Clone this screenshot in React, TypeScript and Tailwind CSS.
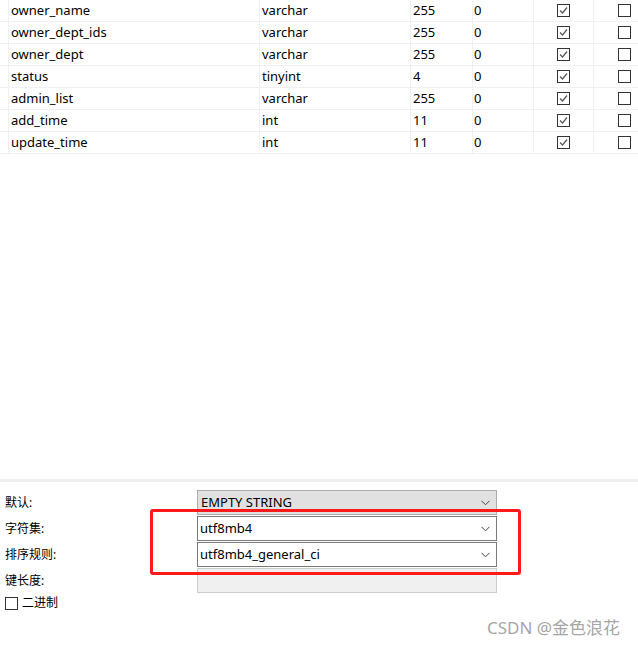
import React from 'react';

type Row = { name: string; type: string; len: string; dec: string };

const rows: Row[] = [
  { name: 'owner_name', type: 'varchar', len: '255', dec: '0' },
  { name: 'owner_dept_ids', type: 'varchar', len: '255', dec: '0' },
  { name: 'owner_dept', type: 'varchar', len: '255', dec: '0' },
  { name: 'status', type: 'tinyint', len: '4', dec: '0' },
  { name: 'admin_list', type: 'varchar', len: '255', dec: '0' },
  { name: 'add_time', type: 'int', len: '11', dec: '0' },
  { name: 'update_time', type: 'int', len: '11', dec: '0' },
];

function CheckBox({ checked }: { checked?: boolean }) {
  return (
    <span className="flex h-[13px] w-[13px] items-center justify-center border border-[#333333] bg-white">
      {checked && (
        <svg width="11" height="11" viewBox="0 0 11 11">
          <polyline points="2,5.5 4.5,8 9,2.5" fill="none" stroke="#555555" strokeWidth="1.2" />
        </svg>
      )}
    </span>
  );
}

function Chevron() {
  return (
    <svg width="9" height="6" viewBox="0 0 9 6" className="shrink-0">
      <polyline points="0.5,0.8 4.5,4.8 8.5,0.8" fill="none" stroke="#404040" strokeWidth="1" />
    </svg>
  );
}

function SelectField({ value, muted }: { value: string; muted?: boolean }) {
  return (
    <div
      className={
        muted
          ? 'flex h-[25px] w-[300px] items-center justify-between border border-[#adadad] bg-[#e1e1e1] pl-[3px] pr-[6px]'
          : 'flex h-[25px] w-[300px] items-center justify-between border border-[#7a7a7a] bg-white pl-[2px] pr-[6px]'
      }
    >
      <span className="text-[13px] text-black">{value}</span>
      <Chevron />
    </div>
  );
}

export default function App() {
  const cell = 'flex h-full items-center border-r border-[#f0f0f0]';
  return (
    <div
      className="relative h-[647px] w-[638px] overflow-hidden bg-white text-black"
      style={{ fontFamily: '"Noto Sans", "Noto Sans CJK SC", sans-serif' }}
    >
      {/* field table */}
      <div className="h-[479px]">
        {rows.map((r) => (
          <div key={r.name} className="flex h-[22px] border-b border-[#f0f0f0] text-[13px] leading-none">
            <div className={`${cell} w-[9px]`} />
            <div className={`${cell} w-[251px] pl-[2px]`}>{r.name}</div>
            <div className={`${cell} w-[151px] pl-[2px]`}>{r.type}</div>
            <div className={`${cell} w-[62px] pl-[2px]`}>{r.len}</div>
            <div className={`${cell} w-[61px] pl-[1px]`}>{r.dec}</div>
            <div className={`${cell} w-[60px] justify-center`}>
              <CheckBox checked />
            </div>
            <div className="flex h-full flex-1 items-center pl-[24px]">
              <CheckBox />
            </div>
          </div>
        ))}
      </div>

      <div className="h-[3px] bg-[#f0f0f0]" />

      {/* column properties */}
      <div className="flex flex-col gap-[1px] pt-[8px] text-[12px]">
        {[
          { label: '默认:', field: <SelectField value="EMPTY STRING" muted /> },
          { label: '字符集:', field: <SelectField value="utf8mb4" /> },
          { label: '排序规则:', field: <SelectField value="utf8mb4_general_ci" /> },
          {
            label: '键长度:',
            field: <div className="h-[25px] w-[300px] border border-[#cccccc] bg-[#f0f0f0]" />,
          },
        ].map((f) => (
          <div key={f.label} className="flex items-center">
            <span className="w-[197px] pl-[5px]">{f.label}</span>
            {f.field}
          </div>
        ))}
        <label className="flex items-center gap-[4px] pl-[5px]">
          <CheckBox />
          <span>二进制</span>
        </label>
      </div>

      {/* annotation */}
      <div className="absolute left-[150px] top-[509px] h-[66px] w-[371px] rounded-[3px] border-[3px] border-[#ff1a1a]" />

      <div className="absolute left-[487px] top-[615px] text-[17px] text-[#a6a6a6]">CSDN @金色浪花</div>
    </div>
  );
}
